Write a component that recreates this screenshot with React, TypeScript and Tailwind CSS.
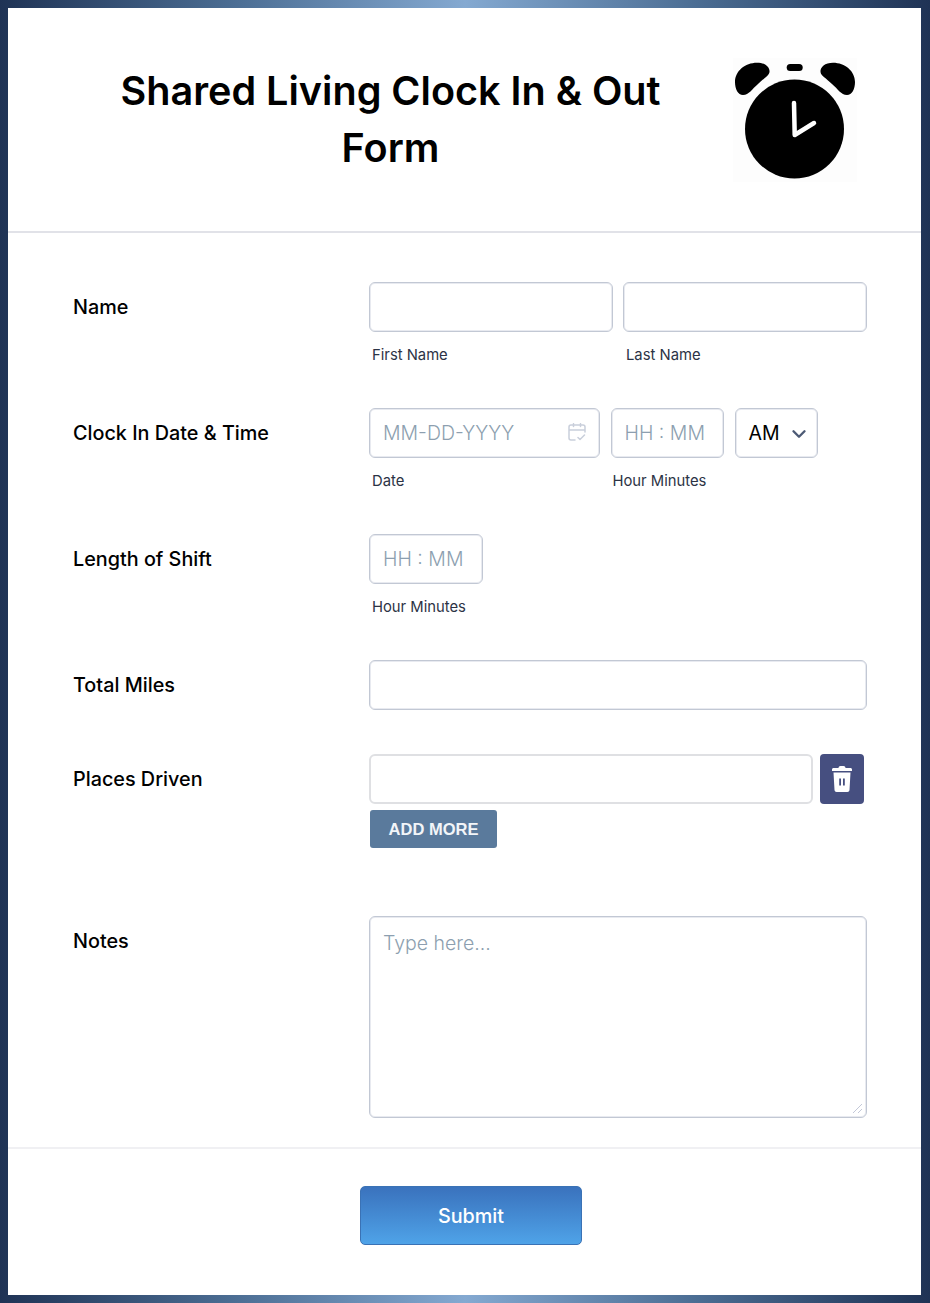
import React from 'react'
import { ChevronDown } from 'lucide-react'

const font = { fontFamily: 'Inter, sans-serif' }

const boxCls = 'rounded-[6px] border border-[#c2c8d4] bg-white shadow-[inset_0_0_0_1px_#e8eaf0]'

const inputCls = `h-[50px] ${boxCls} px-[13px] text-[19.5px] text-black outline-none placeholder:text-[19.5px] placeholder:font-light placeholder:text-[#8d9fb0]`

const Label: React.FC<{ children: React.ReactNode }> = ({ children }) => (
  <div className="w-[296px] shrink-0 pt-[12px] text-[19.8px] leading-[26px] font-medium text-black">{children}</div>
)

const Sub: React.FC<{ children: React.ReactNode; className?: string }> = ({ children, className }) => (
  <div className={`mt-[14px] pl-[3px] text-[14.8px] leading-[18px] text-[#2c3345] ${className ?? ''}`}>{children}</div>
)

const AlarmClock = () => (
  <svg viewBox="0 0 124 124" className="h-[124px] w-[124px] bg-[#fdfdfd]">
    <circle cx="61.5" cy="71" r="49.5" fill="#000" />
    <path d="M2 24 C2 13 12 4.700 24 4.700 C32 4.700 37 9 36.500 14 C36 18 31 20 25 26 C19 31 16 37 10 37 C5 37 2 31 2 24 Z" fill="#000" />
    <path d="M122 24 C122 13 112 4.700 100 4.700 C92 4.700 87 9 87.500 14 C88 18 93 20 99 26 C105 31 108 37 114 37 C119 37 122 31 122 24 Z" fill="#000" />
    <rect x="53.700" y="6" width="16" height="7" rx="3.500" fill="#000" />
    <path d="M61 45 L61.700 77 L81 65" fill="none" stroke="#fff" strokeWidth="4.500" strokeLinecap="round" strokeLinejoin="round" />
  </svg>
)

const TrashIcon = () => (
  <svg viewBox="0 0 20 26" className="h-[26px] w-[20px]" fill="#fff">
    <path d="M6.500 2 C6.500 .8 7.300 0 8.500 0 H11.500 C12.700 0 13.500 .8 13.500 2 H18.500 C19.300 2 20 2.700 20 3.500 V5 H0 V3.500 C0 2.700 .7 2 1.500 2 Z" />
    <path
      fillRule="evenodd"
      d="M1.500 6.500 H18.500 L17.500 24 C17.400 25.200 16.500 26 15.400 26 H4.600 C3.500 26 2.600 25.200 2.500 24 Z M7.200 12.500 V19.500 H9 V12.500 Z M11 12.500 V19.500 H12.800 V12.500 Z"
    />
  </svg>
)

const CalendarIcon = () => (
  <svg viewBox="0 0 18 18" className="absolute top-[15px] right-[14px] h-[18px] w-[18px]" fill="none" stroke="#c9cfdb" strokeWidth="1.500" strokeLinecap="round" strokeLinejoin="round">
    <path d="M7 17 H3 A2 2 0 0 1 1 15 V4 A2 2 0 0 1 3 2 H15 A2 2 0 0 1 17 4 V9 M1 7 H17 M5.500 .7 V3.500 M12.500 .7 V3.500 M10 14.500 L12 16.500 L16.500 12" />
  </svg>
)

export default function App() {
  return (
    <div
      style={font}
      className="h-[1303px] bg-[linear-gradient(to_right,#1f3355,#4b6d93_25%,#84a9d1_50%,#4b6d93_75%,#1f3355)] pt-[8px] pr-[9px] pb-[8px] pl-[8px]"
    >
      <div className="h-full bg-white">
        <header className="flex h-[225px] border-b-2 border-[#e1e2e8]">
          <div className="flex w-[765px] flex-col items-center pt-[55px]">
            <h1 className="w-[600px] text-center text-[39.6px] leading-[57px] font-semibold text-black">
              Shared Living Clock In &amp; Out Form
            </h1>
          </div>
          <div className="pt-[50px]">
            <div className="ml-[-40px]">
              <AlarmClock />
            </div>
          </div>
        </header>

        <form className="pl-[65px] pt-[49px]">
          <div className="flex h-[126px]">
            <Label>Name</Label>
            <div className="flex gap-[10px]">
              <div className="w-[244px]">
                <input className={`${inputCls} w-full`} />
                <Sub>First Name</Sub>
              </div>
              <div className="w-[244px]">
                <input className={`${inputCls} w-full`} />
                <Sub>Last Name</Sub>
              </div>
            </div>
          </div>

          <div className="flex h-[126px]">
            <Label>Clock In Date &amp; Time</Label>
            <div className="flex gap-[11px]">
              <div className="w-[230.5px]">
                <div className="relative">
                  <input placeholder="MM-DD-YYYY" className={`${inputCls} w-full`} />
                  <CalendarIcon />
                </div>
                <Sub>Date</Sub>
              </div>
              <div className="w-[113px]">
                <input placeholder="HH : MM" className={`${inputCls} w-full`} />
                <Sub className="-ml-[1px] whitespace-nowrap">Hour Minutes</Sub>
              </div>
              <div className={`flex h-[50px] w-[83px] items-center justify-between ${boxCls} pt-[2px] pr-[7px] pl-[13px] text-[19.5px] text-black`}>
                AM
                <ChevronDown className="h-[22px] w-[22px] text-[#4c5a75]" strokeWidth={2.600} />
              </div>
            </div>
          </div>

          <div className="flex h-[126px]">
            <Label>Length of Shift</Label>
            <div className="w-[114px]">
              <input placeholder="HH : MM" className={`${inputCls} w-full`} />
              <Sub className="whitespace-nowrap">Hour Minutes</Sub>
            </div>
          </div>

          <div className="flex h-[94px]">
            <Label>Total Miles</Label>
            <input className={`${inputCls} w-[498px]`} />
          </div>

          <div className="flex h-[162px]">
            <Label>Places Driven</Label>
            <div>
              <div className="flex">
                <input className="h-[50px] w-[444px] rounded-[6px] border-2 border-[#dfe0e3] bg-white outline-none" />
                <button type="button" className="ml-[7px] flex h-[50px] w-[44px] items-center justify-center rounded-[4px] bg-[#464f80]">
                  <TrashIcon />
                </button>
              </div>
              <button
                type="button"
                className="mt-[6px] ml-[1px] h-[38px] w-[127px] rounded-[3px] bg-[#5a7a9c] text-[16.5px] font-bold text-[#f2f5f8]"
                style={{ fontFamily: '"Liberation Sans", sans-serif' }}
              >
                ADD MORE
              </button>
            </div>
          </div>

          <div className="flex">
            <Label>Notes</Label>
            <div className="relative">
              <textarea
                placeholder="Type here..."
                className={`block h-[202px] w-[498px] resize-none ${boxCls} px-[13px] py-[13px] text-[19.5px] leading-[26px] outline-none placeholder:font-light placeholder:text-[#8d9fb0]`}
              />
              <svg viewBox="0 0 9 9" className="absolute right-[5px] bottom-[5px] h-[9px] w-[9px]" stroke="#c3c8d8" strokeWidth="1">
                <path d="M0 9 L9 0 M5 9 L9 5" />
              </svg>
            </div>
          </div>
        </form>

        <div className="mt-[29px] border-t-2 border-[#f0f0f3] pt-[37px] pl-[352px]">
          <button
            type="button"
            className="h-[59px] w-[222px] rounded-[5px] border border-[#3a72b5] bg-gradient-to-b from-[#3a72bd] to-[#4fa3e8] pt-[2px] text-[19.8px] font-medium text-white"
          >
            Submit
          </button>
        </div>
      </div>
    </div>
  )
}
